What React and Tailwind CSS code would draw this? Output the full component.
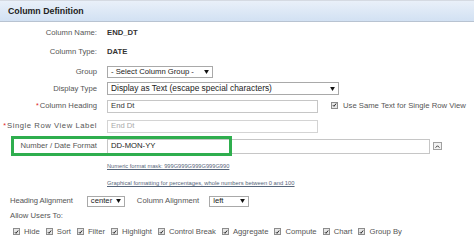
import React from 'react';

function Arrow() {
  return (
    <svg viewBox="0 0 6 5" className="h-[4px] w-[5px]">
      <path d="M0 0 H6 L3 5 Z" fill="#111" />
    </svg>
  );
}

function Check() {
  return (
    <span className="inline-flex h-[7px] w-[7px] shrink-0 items-center justify-center border border-[#8c8c8c] bg-[#e6e6e6]">
      <svg viewBox="0 0 8 8" className="h-[6px] w-[6px]">
        <path d="M1.4 4.3 L3.2 6.1 L6.6 1.6" fill="none" stroke="#1a1a1a" strokeWidth="1.5" />
      </svg>
    </span>
  );
}

function Select({ children, className }) {
  return (
    <div className={`flex items-center justify-between border border-[#a9a9a9] bg-white pl-[3px] pr-[3px] text-[#222] ${className}`}>
      <span>{children}</span>
      <Arrow />
    </div>
  );
}

function Row({ label, height, children, star, labelClass = '' }) {
  return (
    <div className={`flex items-center ${height}`}>
      <div className="w-[97px] shrink-0 text-right text-[#555]">
        {star && <span className="mr-[1px] align-top text-[7px] text-[#d22]">*</span>}
        <span className={labelClass}>{label}</span>
      </div>
      <div className="ml-[10px] flex items-center">{children}</div>
    </div>
  );
}

export default function App() {
  const perms = ['Hide', 'Sort', 'Filter', 'Highlight', 'Control Break', 'Aggregate', 'Compute', 'Chart', 'Group By'];

  return (
    <div className="relative h-[244px] w-[474px] overflow-hidden bg-white font-['Liberation_Sans',Arial,sans-serif] text-[7.7px] leading-none">
      {/* Header */}
      <div className="flex h-[22px] items-center border-t border-b border-t-[#d5dae2] border-b-[#b8c3d1] bg-gradient-to-b from-[#e9f0f9] to-[#d2e1f3] pl-[8px] text-[8.8px] font-bold text-[#222]">
        Column Definition
      </div>

      <Row label="Column Name:" height="h-[21px]">
        <span className="font-bold text-[#333]">END_DT</span>
      </Row>
      <Row label="Column Type:" height="h-[18px]">
        <span className="font-bold text-[#333]">DATE</span>
      </Row>
      <Row label="Group" height="h-[21px]">
        <Select className="h-[12px] w-[106px]">- Select Column Group -</Select>
      </Row>
      <Row label="Display Type" height="h-[13px]">
        <Select className="h-[13px] w-[232px] text-[8.4px]">Display as Text (escape special characters)</Select>
      </Row>
      <Row label="Column Heading" height="h-[22px]" star>
        <div className="flex h-[13px] w-[211px] items-center border border-[#c6c6c6] bg-white pl-[3px] text-[#333]">End Dt</div>
        <span className="ml-[13px]"><Check /></span>
        <span className="ml-[5px] text-[#555]">Use Same Text for Single Row View</span>
      </Row>
      <Row label="Single Row View Label" height="h-[18px]" star labelClass="tracking-[0.55px]">
        <div className="flex h-[13px] w-[211px] items-center border border-[#d4d4d4] bg-white pl-[3px] text-[#aaa]">End Dt</div>
      </Row>

      <div className="relative mt-[1px]">
        <Row label="Number / Date Format" height="h-[20px]">
          <div className="flex h-[15px] w-[323px] items-center border border-[#c6c6c6] bg-white pl-[3px] text-[#222]">DD-MON-YY</div>
          <div className="ml-[3px] flex h-[8px] w-[9px] items-center justify-center border border-[#a0a0a0] bg-[#f2f2f2]">
            <svg viewBox="0 0 6 4" className="h-[3px] w-[5px]">
              <path d="M0.5 3.5 L3 1 L5.5 3.5" fill="none" stroke="#222" strokeWidth="1.2" />
            </svg>
          </div>
        </Row>
        <div className="absolute left-[11px] top-0 h-[20px] w-[221px] border-[3px] border-[#2fae4e]" />
      </div>

      <div className="flex h-[22px] items-center pl-[107px] text-[5.7px] text-[#56657a] underline">
        Numeric format mask: 999G999G999G999G990
      </div>
      <div className="flex h-[12px] items-center pl-[107px] text-[5.8px] text-[#56657a] underline">
        Graphical formatting for percentages, whole numbers between 0 and 100
      </div>

      {/* Alignment */}
      <div className="flex h-[22px] items-center pl-[10px] text-[#555]">
        <span className="tracking-[-0.1px]">Heading Alignment</span>
        <Select className="ml-[14px] h-[11px] w-[38px] text-[#222]">center</Select>
        <span className="ml-[12px]">Column Alignment</span>
        <Select className="ml-[10px] h-[11px] w-[40px]">left</Select>
      </div>

      <div className="flex h-[8px] items-center pl-[10px] text-[#555]">Allow Users To:</div>

      <div className="flex h-[24px] items-center pl-[13px] text-[#555]">
        {perms.map((p) => (
          <div key={p} className="mr-[6px] flex items-center">
            <Check />
            <span className="ml-[4px]">{p}</span>
          </div>
        ))}
      </div>
    </div>
  );
}
